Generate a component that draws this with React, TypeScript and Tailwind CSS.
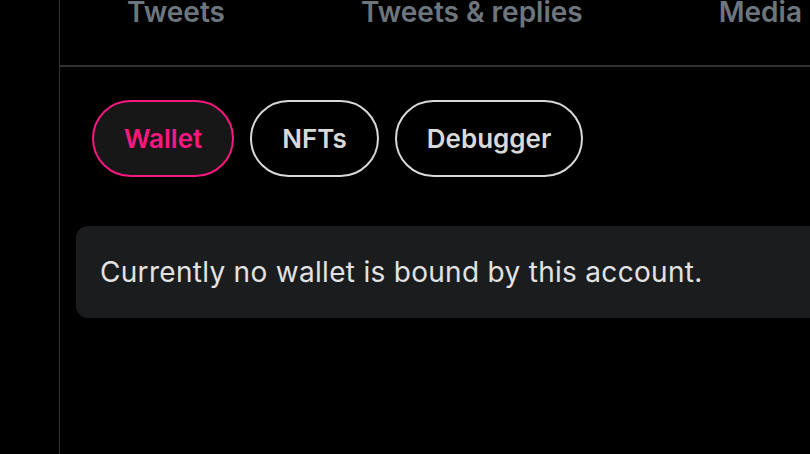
import React from "react";

export default function App() {
  const font = { fontFamily: "Inter, 'Noto Sans', sans-serif" };
  return (
    <div className="w-[810px] h-[454px] bg-black overflow-hidden" style={font}>
      <div className="ml-[59px] h-full border-l border-[#2f3336] flex flex-col">
        <div className="h-[67px] border-b-2 border-[#2f3336] flex gap-[136px] pl-[67px] overflow-hidden">
          <span className="text-[28px] font-semibold leading-none -mt-[2px] text-[#6e767d] whitespace-nowrap">Tweets</span>
          <span className="text-[28px] font-semibold leading-none -mt-[2px] text-[#6e767d] whitespace-nowrap">Tweets &amp; replies</span>
          <span className="text-[28px] font-semibold leading-none -mt-[2px] text-[#6e767d] whitespace-nowrap">Media</span>
        </div>
        <div className="flex gap-4 pl-[32px] pt-[33px]">
          <button className="h-[77px] px-[30px] rounded-full border-2 border-[#f91880] bg-[#171717] text-[#f91880] text-[26px] font-semibold">Wallet</button>
          <button className="h-[77px] px-[30px] rounded-full border-2 border-[#d9d9d9] bg-black text-[#d9d9d9] text-[26px] font-semibold">NFTs</button>
          <button className="h-[77px] px-[30px] rounded-full border-2 border-[#d9d9d9] bg-black text-[#d9d9d9] text-[26px] font-semibold">Debugger</button>
        </div>
        <div className="ml-[16px] mt-[49px] h-[92px] rounded-l-[12px] bg-[#1b1c1e] flex items-center pl-[24px]">
          <span className="text-[28px] tracking-[0.3px] text-[#e2e2e2] whitespace-nowrap">Currently no wallet is bound by this account.</span>
        </div>
      </div>
    </div>
  );
}
